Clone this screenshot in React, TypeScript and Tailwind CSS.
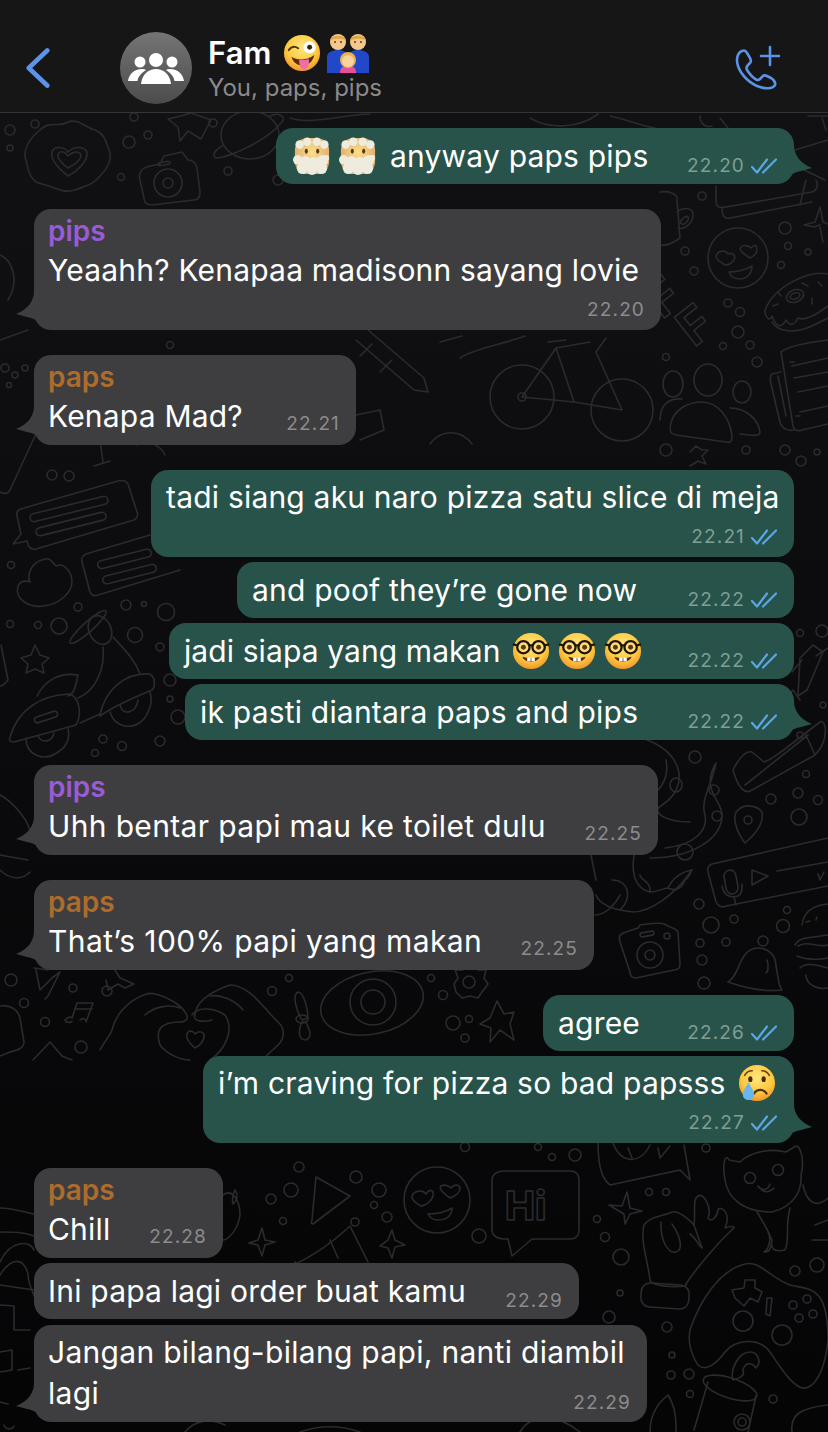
import React from "react";

const FONT = "font-['Inter','Liberation_Sans',sans-serif]";

function Face({ id, children }: { id: string; children: React.ReactNode }) {
  return (
    <svg viewBox="0 0 40 40" className={emojiBase}>
      <defs>
        <radialGradient id={id} cx="50%" cy="35%" r="65%">
          <stop offset="0%" stopColor="#ffe680" />
          <stop offset="65%" stopColor="#fdc93f" />
          <stop offset="100%" stopColor="#f2962b" />
        </radialGradient>
      </defs>
      <circle cx="20" cy="20" r="19" fill={`url(#${id})`} />
      {children}
    </svg>
  );
}

const emojiBase = "block shrink-0 w-[38px] h-[38px]";

function Wink() {
  return (
    <Face id="gw">
      <path d="M6 17 C9 13 13 13 16 15" fill="none" stroke="#5b3410" strokeWidth="2" strokeLinecap="round" />
      <circle cx="28" cy="14" r="6.5" fill="#fff" />
      <circle cx="28" cy="14" r="2.6" fill="#3a2408" />
      <path d="M9 24 C15 28 25 28 33 22 C31 30 26 33 20 33 C14 33 10 29 9 24 Z" fill="#5b2a10" />
      <path d="M17 27 C21 28 25 27 27 26 C28 31 27 37 22 37 C18 37 17 32 17 27 Z" fill="#f06ea8" />
    </Face>
  );
}

function Family() {
  return (
    <svg viewBox="0 0 42 40" className="block w-[42px] h-[40px]">
      <path d="M0 40 V24 C0 19 6 17 11 17 C16 17 21 19 21 24 C21 19 26 17 31 17 C36 17 42 19 42 24 V40 Z" fill="#2148c8" />
      <circle cx="11" cy="9" r="8" fill="#f4c88c" />
      <path d="M3 8 C3 1 19 1 19 8 C16 5 7 5 3 8 Z" fill="#e0a84a" />
      <circle cx="31" cy="9" r="8" fill="#f4c88c" />
      <path d="M23 8 C23 1 39 1 39 8 C36 5 27 5 23 8 Z" fill="#e0a84a" />
      <path d="M13 40 C13 34 16 33 21 33 C26 33 29 34 29 40 Z" fill="#e84f9a" />
      <circle cx="21" cy="27" r="8" fill="#e9b24f" />
      <circle cx="21" cy="28" r="6" fill="#f8d3a0" />
      <circle cx="8" cy="9" r="1" fill="#5a3a18" />
      <circle cx="14" cy="9" r="1" fill="#5a3a18" />
      <circle cx="28" cy="9" r="1" fill="#5a3a18" />
      <circle cx="34" cy="9" r="1" fill="#5a3a18" />
    </svg>
  );
}

function CloudFace() {
  return (
    <svg viewBox="0 0 40 40" className={emojiBase}>
      <defs>
        <radialGradient id="gc" cx="50%" cy="40%" r="60%">
          <stop offset="0%" stopColor="#f9e08a" />
          <stop offset="100%" stopColor="#e0a86a" />
        </radialGradient>
      </defs>
      <rect x="2" y="1" width="36" height="38" rx="13" fill="url(#gc)" />
      <g fill="#efebdf">
        <circle cx="7" cy="8" r="4.5" />
        <circle cx="15" cy="5" r="4.5" />
        <circle cx="25" cy="5" r="4.5" />
        <circle cx="33" cy="8" r="4.5" />
        <circle cx="5" cy="24" r="5" />
        <circle cx="13" cy="26" r="6" />
        <circle cx="22" cy="27" r="6" />
        <circle cx="31" cy="25" r="6" />
        <circle cx="35" cy="22" r="3" />
        <circle cx="10" cy="33" r="6" />
        <circle cx="20" cy="34" r="6" />
        <circle cx="30" cy="33" r="6" />
      </g>
      <ellipse cx="14" cy="15" rx="1.6" ry="2.6" fill="#5b3410" />
      <ellipse cx="26" cy="15" rx="1.6" ry="2.6" fill="#5b3410" />
    </svg>
  );
}

function Nerd() {
  return (
    <Face id="gn">
      <circle cx="12" cy="16" r="6.5" fill="#ffdc7a" stroke="#1c1408" strokeWidth="2.4" />
      <circle cx="28" cy="16" r="6.5" fill="#ffdc7a" stroke="#1c1408" strokeWidth="2.4" />
      <path d="M1 13 L6 14 M18 14 L22 14 M34 14 L39 13" stroke="#1c1408" strokeWidth="2.4" />
      <circle cx="12" cy="16" r="2.6" fill="#5b3410" />
      <circle cx="28" cy="16" r="2.6" fill="#5b3410" />
      <path d="M11 26 C16 28 24 28 29 26 C27 33 13 33 11 26 Z" fill="#5b2a10" />
      <rect x="16" y="27" width="3.6" height="4" fill="#fff" />
      <rect x="20.4" y="27" width="3.6" height="4" fill="#fff" />
    </Face>
  );
}

function Crying() {
  return (
    <Face id="gy">
      <path d="M7 12 C9 8 12 7 15 7 M25 7 C28 7 31 8 33 12" fill="none" stroke="#6b3d10" strokeWidth="1.6" strokeLinecap="round" />
      <ellipse cx="13" cy="16" rx="2.2" ry="3" fill="#4a2a0c" />
      <ellipse cx="27" cy="16" rx="2.2" ry="3" fill="#4a2a0c" />
      <path d="M17 31 C20 26 27 26 30 31" fill="none" stroke="#5b3010" strokeWidth="2.4" strokeLinecap="round" />
      <path d="M11 19 C13 24 17 28 17 32 A6 6 0 0 1 5 32 C5 28 9 24 11 19 Z" fill="#6bb6ee" />
    </Face>
  );
}

const circles: [number, number, number][] = [
  [10, 130, 5], [35, 124, 4], [10, 148, 3], [134, 117, 4], [213, 123, 4], [148, 135, 4], [129, 142, 6], [121, 177, 3.5], [228, 171, 4], [278, 180, 5],
  [702, 196, 4], [785, 228, 6], [788, 246, 3.5], [781, 265, 3.5], [808, 252, 3], [685, 251, 4], [694, 271, 4], [728, 303, 4], [740, 312, 4.5], [738, 332, 6], [723, 346, 3.5], [750, 345, 4], [757, 362, 5], [666, 357, 3.5],
  [666, 450, 6], [746, 450, 4], [785, 450, 5], [801, 461, 5], [817, 452, 3],
  [5, 368, 4], [15, 375, 3], [25, 368, 3], [9, 385, 2.5], [52, 475, 5], [69, 476, 5], [170, 345, 3.5],
  [11, 565, 3.5], [78, 607, 4], [126, 605, 5], [144, 604, 2.5], [166, 612, 8.5], [10, 624, 3.5], [38, 625, 3.5], [59, 626, 8], [135, 635, 7.5], [160, 647, 4], [170, 680, 6], [170, 699, 3], [178, 717, 7], [103, 739, 4], [122, 746, 4.5], [95, 753, 3.5], [160, 741, 5],
  [800, 633, 3.5], [822, 631, 6], [800, 735, 3], [823, 705, 3],
  [680, 665, 2], [640, 628, 3], [590, 650, 2],
  [806, 774, 3.5], [798, 793, 5], [818, 800, 4.5], [771, 799, 5], [799, 817, 8], [695, 757, 6],
  [699, 904, 5], [711, 925, 8], [734, 919, 4], [787, 910, 3.5], [783, 926, 6.5], [700, 943, 4], [726, 942, 4], [702, 960, 5], [704, 983, 6],
  [11, 980, 6], [73, 988, 4], [107, 991, 5], [24, 1003, 4.5], [45, 1022, 4.5], [81, 1047, 6], [289, 978, 3.5], [272, 991, 4.5], [431, 978, 3.5], [443, 995, 4.5], [453, 1023, 7], [469, 1019, 3.5], [465, 1038, 4],
  [299, 1167, 5], [271, 1199, 5], [291, 1190, 7], [356, 1177, 6], [379, 1190, 7], [374, 1205, 3.5], [355, 1222, 4], [387, 1217, 5], [283, 1221, 3.5],
  [465, 1147, 4.5], [538, 1147, 3.5], [552, 1157, 3.5], [575, 1155, 6], [479, 1236, 7], [597, 1219, 3.5], [605, 1237, 4.5],
  [649, 1192, 3.5], [666, 1192, 3.5], [621, 1257, 8], [620, 1293, 3], [609, 1317, 6],
  [667, 1327, 5], [672, 1355, 3], [671, 1375, 4], [689, 1374, 5], [690, 1394, 3.5], [773, 1399, 4], [795, 1271, 5], [817, 1265, 7], [706, 1148, 4],
];

function Wallpaper() {
  return (
    <svg viewBox="0 0 828 1432" className="absolute inset-0 w-full h-full" fill="none" stroke="#2b2b2e" strokeWidth="1.6" strokeLinecap="round" strokeLinejoin="round">
      {circles.map(([x, y, r], i) => (
        <circle key={i} cx={x} cy={y} r={r} />
      ))}
      <path d="M40 130 C50 120 58 128 68 122 C78 118 86 128 95 130 C106 134 106 144 110 152 C112 162 106 170 100 176 C92 186 84 186 75 190 C62 194 52 186 42 184 C30 182 28 170 26 160 C22 150 30 138 40 130 Z" />
      <path d="M68 176 C60 170 50 160 52 152 C54 146 64 146 68 152 C74 146 84 146 87 152 C88 162 76 172 68 176 Z" />
      <path d="M68 168 C62 164 57 158 58 154 C60 150 66 152 68 156 C72 152 79 150 81 155 C81 160 74 165 68 168 Z" />
      <path d="M140 180 C138 172 142 168 150 166 L160 164 L164 156 L182 152 L188 160 C194 160 196 164 197 168 L200 192 C200 198 198 200 194 200 L152 205 C146 205 144 202 144 198 Z" />
      <circle cx="168" cy="183" r="14" />
      <circle cx="168" cy="183" r="5" />
      <rect x="158" y="162" width="12" height="3" rx="1.5" transform="rotate(-10 164 163)" />
      <ellipse cx="250" cy="135" rx="29" ry="24" />
      <path d="M222 146 C212 152 212 158 218 158 C232 156 268 140 282 122 C286 116 278 112 270 116" />
      <path d="M193 119 L183 138 L170 130 L162 140 L160 126 L150 118 L163 115 L173 112 Z" transform="translate(18 1)" />
      <path d="M290 118 C310 125 340 115 370 114 M530 118 C550 130 580 128 598 114 M610 116 C630 120 650 130 670 130" />
      <path d="M700 116 C700 124 706 128 712 126 M720 118 L728 128" />
      <path d="M660 192 C672 190 678 196 677 200 L680 238 C672 244 666 246 660 245" />
      <path d="M677 212 C684 206 694 208 693 216 C692 224 684 230 678 228 M680 222 C684 216 690 214 688 220 C686 224 682 226 680 222 Z" />
      <path d="M716 186 L716 200 C716 208 720 208 726 207 L812 192 C818 190 818 184 816 180 M722 208 C722 218 726 219 730 218 L812 202" />
      <path d="M820 225 L814 227 L804 225 L815 222 L820 207 L823 222 L828 224 M820 227 L823 242" />
      <circle cx="738" cy="258" r="30" />
      <path d="M725 265 C719 261 714 258 717 254 C720 250 726 250 728 254 C733 252 736 256 734 260 C732 263 728 265 725 265 Z" />
      <path d="M750 258 C744 254 738 250 741 247 C744 244 749 246 751 248 C755 244 757 245 757 250 C757 254 754 256 750 258 Z" />
      <path d="M729 272 C736 272 745 270 752 266 C752 274 746 279 740 279 C735 279 731 277 729 272 Z" />
      <text x="0" y="0" transform="translate(662 320) rotate(-38)" fontFamily="Inter" fontWeight="700" fontSize="50" fill="none">F</text>
      <text x="0" y="0" transform="translate(694 348) rotate(-38)" fontFamily="Inter" fontWeight="700" fontSize="50" fill="none">F</text>
      <path d="M765 310 C775 285 810 270 828 274 M765 310 C765 318 770 322 772 316 C776 328 782 328 786 320 C790 326 794 326 798 318 C806 322 820 312 828 306 M772 322 C778 332 794 334 812 326 L828 318" />
      <ellipse cx="795" cy="296" rx="9" ry="6" transform="rotate(-20 795 296)" />
      <ellipse cx="795" cy="296" rx="5" ry="3" transform="rotate(-20 795 296)" />
      <path d="M778 292 L781 296 M773 306 L778 304 M802 283 L808 286 M812 298 L812 304 M818 282 L822 286" />
      <ellipse cx="708" cy="380" rx="14" ry="16" />
      <ellipse cx="673" cy="384" rx="10" ry="13" />
      <ellipse cx="742" cy="392" rx="9" ry="11" />
      <path d="M670 428 C672 408 690 402 702 402 C718 402 730 418 732 436 C732 442 730 443 726 442 L676 435 C671 434 670 432 670 428 Z" />
      <path d="M730 408 C745 408 758 418 760 432 C760 436 756 436 740 434 M682 399 C672 398 660 402 660 420" />
      <path d="M690 452 L696 446 L702 450 L708 450 L702 456 L706 464 L698 461 L690 466" />
      <path d="M781 352 C788 346 812 342 828 340 M781 352 L793 426 C794 430 798 432 802 430 L828 424" />
      <path d="M781 372 L772 374 C770 376 770 380 771 384 L780 422 C782 430 790 431 794 430" />
      <path d="M778 376 L786 416" />
      <path d="M792 366 L828 358 M794 378 L828 372 M798 392 L828 386 M800 412 L828 406 M790 362 L794 362 M796 416 L800 416" />
      <path d="M356 340 L414 390 L428 392 L424 378 L368 330 M372 344 L360 356 M392 360 L380 372" />
      <circle cx="522" cy="397" r="32" />
      <circle cx="522" cy="397" r="4" />
      <circle cx="622" cy="410" r="31" />
      <path d="M522 397 L556 348 L590 342 M556 348 L574 402 L622 410 L596 352 L606 338 M574 402 L522 397 M548 342 L566 340" />
      <path d="M460 358 C470 350 500 345 525 336 M440 342 L462 336 M430 444 C440 430 460 428 472 444 M356 415 L380 410 L384 430 L360 440" />
      <path d="M100 440 L103 462 M94 466 L110 461 M85 425 C88 438 110 440 118 428 M136 445 C150 440 160 445 165 455" />
      <path d="M40 425 L10 490 C8 494 4 494 0 492 M60 412 C62 420 72 420 80 412" />
      <path d="M24 508 C18 509 16 512 17 516 L21 534 L13 544 L27 541 C28 548 32 550 36 549 L134 520 C138 518 138 514 137 512 L128 484 C126 480 122 480 118 481 Z" />
      <rect x="29" y="505" width="80" height="8" rx="4" transform="rotate(-14 69 509)" />
      <rect x="35" y="520" width="72" height="8" rx="4" transform="rotate(-14 71 524)" />
      <path d="M150 535 L86 554 C82 556 81 558 82 562 L90 592 C92 596 94 596 98 595 L180 570" />
      <rect x="97" y="555" width="55" height="8" rx="4" transform="rotate(-14 124 559)" />
      <rect x="102" y="570" width="55" height="8" rx="4" transform="rotate(-14 130 574)" />
      <path d="M30 582 C26 572 34 562 42 560 C50 556 52 562 56 566 C64 562 72 572 72 582 C72 592 60 604 44 606 C30 608 14 600 18 586 C20 582 24 580 30 582 Z" />
      <path d="M35 645 L40 655 L49 658 L42 664 L44 673 L35 669 L26 673 L28 664 L21 658 L31 655 Z" />
      <path d="M10 737 C18 710 40 695 70 694 C80 698 82 715 76 725 L14 742 C9 742 9 739 10 737 Z" />
      <path d="M37 696 C45 680 60 672 78 675 C76 685 74 695 68 696" />
      <path d="M100 715 C105 690 125 672 150 674 C156 678 155 688 152 690 C135 697 115 705 100 716 Z" />
      <path d="M113 637 C125 650 135 660 140 674" />
      <ellipse cx="88" cy="627" rx="24" ry="5" transform="rotate(-42 88 627)" />
      <ellipse cx="100" cy="630" rx="11" ry="15" transform="rotate(-25 100 630)" />
      <path d="M103 647 C105 665 98 690 78 698 M80 723 L100 714" />
      <rect x="34" y="714" width="24" height="6" rx="3" transform="rotate(-18 46 717)" />
      <path d="M26 738 C26 756 45 762 58 752 C68 746 70 736 68 729 M38 736 C42 744 52 742 54 733" />
      <path d="M110 712 C115 730 140 732 148 712 C152 704 152 698 150 692 M120 705 C122 716 136 714 138 700" />
      <path d="M1 645 L8 680 C5 684 2 686 0 686" />
      <path d="M647 740 C683 753 690 787 662 805 C650 812 665 822 690 822 M640 808 C660 790 670 780 666 760" />
      <path d="M716 763 C700 790 722 800 722 815 C722 840 690 858 650 858 M716 763 C712 785 700 800 705 815 C708 830 695 845 665 848" />
      <ellipse cx="676" cy="785" rx="6" ry="7" />
      <circle cx="714" cy="790" r="5" />
      <circle cx="717" cy="816" r="5" />
      <circle cx="685" cy="852" r="8" />
      <path d="M634 855 C630 880 640 890 650 892 C660 892 662 888 668 888 C676 892 682 888 685 880 C692 875 690 870 692 870 C680 872 672 880 668 888 M650 892 C652 882 640 880 640 875" />
      <path d="M692 870 C675 895 650 912 633 912 C612 910 600 905 596 895 M612 880 C630 880 632 900 620 910" />
      <path d="M595 915 C605 915 615 905 620 895 M590 850 L596 880" />
      <path d="M733 770 C738 760 745 750 752 752 L764 762 C772 760 790 745 820 722 C826 718 830 740 815 755 L752 790 C745 795 738 788 733 770 Z M806 735 L815 755 M745 785 L808 735" />
      <path d="M800 658 L813 645 L823 652 L807 690 L798 696 Z M816 656 L828 648" />
      <path d="M792 672 L802 660 M783 700 L793 690 L800 700" />
      <path d="M745 843 C735 830 732 815 738 810 C745 803 758 806 762 812 C764 822 758 832 745 843 Z" />
      <circle cx="748" cy="820" r="4" />
      <path d="M828 838 L712 864 C708 866 707 868 708 872 L716 902 C718 906 722 908 726 906 L828 886" />
      <rect x="725" y="870" width="12" height="24" rx="6" transform="rotate(-10 731 882)" />
      <path d="M722 886 C724 896 730 898 738 896 C742 894 742 890 742 884 M734 897 L736 905" />
      <path d="M752 870 L752 885 L768 876 Z" />
      <path d="M777 871 L828 862 M820 880 L824 872 M818 874 L820 880" />
      <path d="M620 942 C618 936 620 934 626 932 L638 928 L640 925 C648 924 660 922 664 924 L668 926 C672 928 676 928 678 932 L680 964 C680 968 678 970 674 970 L636 978 C632 978 630 976 630 972 Z" />
      <circle cx="650" cy="955" r="13" />
      <circle cx="650" cy="955" r="5" />
      <rect x="640" y="932" width="14" height="4" rx="2" transform="rotate(-10 647 934)" />
      <circle cx="667" cy="936" r="3" />
      <path d="M728 982 C736 978 738 965 744 956 C748 950 754 948 758 948 C768 948 776 955 776 966 C778 975 778 985 782 990 C764 992 745 988 728 982 Z" />
      <circle cx="763" cy="941" r="5" />
      <path d="M767 960 C769 966 768 972 766 973" />
      <path d="M802 925 C804 910 815 905 828 904 M798 946 C808 940 818 948 828 945 M795 945 C800 936 812 938 828 935 M797 956 C806 960 820 960 828 958 M800 968 C806 962 816 965 828 968 M806 975 C806 985 818 990 828 988" />
      <path d="M816 920 L817 917 M806 922 L810 921" />
      <path d="M36 970 L40 990 L52 978 L60 972 M60 972 L48 996 L45 999 M34 968 L48 970" />
      <path d="M115 970 L120 978 L134 984 L125 988 L118 984 L108 990 L106 980" />
      <path d="M0 1006 C10 1004 18 1010 20 1018 L24 1042 C24 1048 18 1050 10 1052 L0 1056" />
      <path d="M65 1020 C67 1018 70 1016 72 1018 L77 1003 L93 1003 L86 1022 C86 1018 82 1018 80 1020 M76 1009 L92 1009 M72 1021 C72 1022 66 1024 65 1020" />
      <path d="M33 1060 L50 1042 L62 1056 L72 1060" />
      <path d="M100 1050 C105 1040 110 1036 112 1030 C118 1005 145 990 155 994 C165 996 180 1004 185 1012 C190 1018 186 1022 180 1022" />
      <path d="M145 1015 C155 1006 170 1004 180 1008 M180 1022 C160 1022 155 1030 160 1045 C165 1052 178 1060 190 1060" />
      <path d="M195 1015 C196 1002 210 992 230 985 C250 985 265 1010 278 1022 C285 1028 285 1038 278 1045 L262 1060" />
      <path d="M192 1015 C198 1006 215 1008 225 1015 C235 1030 225 1050 210 1060 M195 1015 C192 1022 205 1022 212 1020 M243 1010 C235 1000 220 994 210 996" />
      <path d="M195 1048 C188 1042 185 1036 188 1032 C191 1030 194 1032 195 1034 C197 1032 201 1030 204 1034 C205 1040 200 1046 195 1048 Z" />
      <ellipse cx="372" cy="1003" rx="52" ry="31" transform="rotate(-12 372 1003)" />
      <circle cx="373" cy="1002" r="23" />
      <circle cx="373" cy="1002" r="12" />
      <path d="M302 1020 C296 1010 292 995 298 992 C304 992 308 1010 308 1018 Z M302 1022 C298 1030 298 1040 306 1040 C314 1036 308 1028 306 1022 Z" />
      <ellipse cx="302" cy="1019" rx="6" ry="4" />
      <circle cx="469" cy="982" r="6" />
      <path d="M455 970 L463 970 L467 962 L474 962 L478 970 L486 970 L484 978 L488 984 L482 992 L478 998 L470 996 L462 998 L456 992 L454 984 L458 978 Z" />
      <path d="M497 1001 L504 1014 L514 1012 L510 1024 L514 1040 L500 1030 L490 1042 L491 1028 L480 1024 L490 1018 Z" />
      <path d="M598 1142 C598 1172 604 1180 610 1185 L680 1170 L690 1180 L684 1145 M612 1140 C620 1165 640 1165 650 1145 M628 1148 L632 1158 M670 1146 L660 1158 L658 1148" />
      <path d="M316 1177 L350 1196 L313 1224 C311 1224 311 1222 312 1220 Z" />
      <circle cx="437" cy="1200" r="33" />
      <path d="M421 1206 C414 1202 410 1198 413 1194 C417 1190 423 1190 426 1194 C430 1188 434 1190 433 1196 C432 1200 426 1206 421 1206 Z" />
      <path d="M450 1198 C444 1194 438 1188 441 1186 C444 1184 449 1186 451 1188 C454 1184 459 1184 460 1188 C460 1192 456 1196 450 1198 Z" />
      <path d="M428 1214 C436 1214 446 1212 452 1208 C452 1216 446 1220 438 1220 C433 1220 430 1218 428 1214 Z" />
      <path d="M504 1171 H570 C576 1171 579 1174 579 1180 V1230 C579 1236 576 1239 570 1239 H532 L512 1256 L508 1239 H504 C498 1239 492 1236 492 1230 V1180 C492 1174 498 1171 504 1171 Z" />
      <text x="505" y="1220" fontFamily="Inter" fontWeight="800" fontSize="40" fill="none">Hi</text>
      <path d="M262 1228 L265 1240 L275 1242 L265 1245 L262 1256 L258 1245 L249 1243 L258 1240 Z" />
      <path d="M392 1230 L395 1240 L405 1245 L395 1247 L392 1258 L388 1248 L380 1246 L388 1240 Z" />
      <path d="M627 1192 L630 1208 L642 1211 L630 1214 L625 1224 L624 1214 L609 1205 L622 1206 Z" />
      <path d="M223 1195 C232 1188 240 1200 240 1215 C238 1230 228 1240 223 1240 M235 1190 C232 1196 232 1200 233 1204 C238 1200 238 1194 235 1190" />
      <path d="M280 1270 C310 1260 335 1240 350 1226 L368 1262 M330 1240 L338 1258 M295 1262 L300 1270" />
      <path d="M729 1160 C725 1152 722 1165 725 1180 C728 1200 745 1212 772 1212 C795 1206 802 1190 801 1175 C805 1160 800 1145 796 1146 L786 1152 C770 1148 750 1152 740 1162 Z" />
      <circle cx="750" cy="1178" r="5.5" />
      <circle cx="778" cy="1170" r="5.5" />
      <path d="M758 1186 C762 1192 768 1190 770 1184 M762 1190 C766 1194 772 1190 774 1188" />
      <path d="M757 1212 C765 1225 770 1235 772 1240 C770 1250 770 1252 764 1252 C768 1250 772 1240 768 1232 M790 1208 C785 1225 790 1240 785 1250 C775 1252 770 1250 772 1240 M803 1185 C806 1200 815 1210 828 1198 M815 1225 L828 1220 M812 1240 L828 1240" />
      <path d="M644 1225 C640 1240 648 1262 650 1280 C652 1288 690 1288 686 1284 C695 1270 720 1240 734 1228 C734 1226 730 1226 725 1228 C732 1212 720 1205 718 1210 C716 1220 710 1222 708 1218 C712 1208 704 1192 698 1196 C692 1200 696 1212 694 1225 C690 1220 678 1210 672 1212 C665 1216 650 1216 644 1225 Z" />
      <path d="M661 1222 C660 1240 668 1254 676 1252 C684 1250 680 1235 672 1224 M694 1225 L702 1248 C700 1248 696 1238 690 1234" />
      <rect x="641" y="1284" width="48" height="24" rx="9" transform="rotate(4 665 1296)" />
      <path d="M690 1330 C700 1300 720 1270 745 1264 C760 1260 770 1278 790 1285 C810 1290 828 1285 828 1340 C826 1360 820 1384 806 1388 C795 1390 782 1370 772 1355 C760 1335 735 1340 725 1352 C712 1370 700 1372 695 1360 C690 1350 688 1340 690 1330 Z" />
      <path d="M745 1280 L755 1280 L755 1288 L762 1292 L758 1302 L750 1298 L744 1306 L735 1298 L732 1290 L744 1288 Z" />
      <circle cx="743" cy="1321" r="10" />
      <circle cx="782" cy="1335" r="10" />
      <path d="M767 1298 L772 1298 L770 1316 L766 1314 Z" />
      <circle cx="793" cy="1305" r="4" />
      <circle cx="807" cy="1299" r="4" />
      <circle cx="799" cy="1318" r="4" />
      <circle cx="813" cy="1314" r="4" />
      <path d="M733 1380 C730 1370 738 1352 750 1352 C758 1352 762 1362 756 1368 C752 1362 745 1362 743 1370 C745 1376 740 1378 733 1380 Z" />
      <ellipse cx="730" cy="1388" rx="28" ry="10" transform="rotate(18 730 1388)" />
      <path d="M708 1382 L694 1430 M756 1396 L748 1432" />
      <circle cx="742" cy="1422" r="8" />
      <circle cx="742" cy="1422" r="4" />
      <path d="M792 1432 C790 1415 800 1408 828 1405" />
      <path d="M650 1432 C650 1410 662 1400 668 1395 C676 1408 676 1420 676 1432" />
      <path d="M0 1208 C12 1208 24 1212 34 1214 M0 1232 C14 1232 24 1232 34 1236 M0 1285 L34 1290 M0 1305 L14 1306 L14 1330 L30 1330" />
      <path d="M0 1262 C10 1240 30 1240 34 1250 M0 1275 C12 1256 24 1258 28 1274 C28 1284 34 1294 34 1296" />
      <path d="M0 1352 L12 1350 L12 1370 L0 1372 M18 1370 L30 1368 M0 1402 L8 1404 M4 1425 C6 1430 12 1430 14 1426" />
      <path d="M185 1432 C195 1420 210 1418 225 1425 M300 1432 C320 1425 340 1425 360 1432 M520 1432 C530 1415 555 1412 580 1432" />
      <path d="M0 855 L28 860 M0 870 C10 880 22 880 30 872 M0 255 C12 260 20 280 8 300 M0 795 C10 800 25 815 30 830 M0 340 L28 330" />
      <path d="M670 130 C690 140 720 150 744 160 M795 150 L828 140 M800 168 L825 180 M806 180 L800 205 M826 130 L822 118 M808 116 L828 116" />
    </svg>
  );
}

function Ticks() {
  return (
    <svg viewBox="0 0 26 16" className="w-[26px] h-[16px] ml-[6px] mb-[2px]" fill="none" stroke="#5ca6e4" strokeWidth="2.2" strokeLinecap="round" strokeLinejoin="round">
      <path d="M1 9 L6 14.5 L16 1.5" />
      <path d="M12 14.5 L25 1.5" />
    </svg>
  );
}

function Tail({ side, color }: { side: "l" | "r"; color: string }) {
  return (
    <svg viewBox="0 0 24 34" className={side === "l" ? "absolute left-[-18px] bottom-[7px] w-[24px] h-[34px]" : "absolute right-[-18px] bottom-[7px] w-[24px] h-[34px] -scale-x-100"}>
      <path d="M18 2 C18 12 12 20 0 25 C6 27 14 28 20 31 L24 34 L24 2 Z" fill={color} />
    </svg>
  );
}

type MsgProps = {
  side: "l" | "r";
  w: string;
  name?: "pips" | "paps";
  children: React.ReactNode;
  first?: string;
  time: string;
  tail?: boolean;
  below?: boolean;
  mt: string;
  track?: string;
};

function Msg({ side, w, name, children, first, time, tail, below, mt, track = "tracking-[0.2px]" }: MsgProps) {
  const out = side === "r";
  const inlineAfterName = !below && !!name;
  const timeEl = (
    <div className={`flex items-end shrink-0 ${inlineAfterName ? "mb-[2px]" : ""}`}>
      <span className={`text-[19px] leading-[20px] tracking-[0.06em] ${out ? "text-[#7f9f95]" : "text-[#8c8c8e]"}`}>{time}</span>
      {out && <Ticks />}
    </div>
  );
  const line = <div className={`flex items-center h-[40px] text-[30px] ${track} text-white whitespace-nowrap`}>{children}</div>;
  return (
    <div className={`relative rounded-[17px] ${w} ${mt} ${out ? "self-end mr-[34px] bg-[#27534a] pl-[15px] pr-[17px]" : "self-start ml-[34px] bg-[#3e3e40] pl-[14px] pr-[16px]"} ${name ? "pt-[6px]" : first || below ? "pt-[7px]" : "pt-[8px]"} ${below ? "pb-[10px]" : name || first ? "pb-[9px]" : "pb-[8px]"}`}>
      {tail && <Tail side={side} color={out ? "#27534a" : "#3e3e40"} />}
      {name && (
        <div className={`text-[28px] leading-[32px] font-semibold mb-[3px] ${name === "pips" ? "text-[#9a5bd6]" : "text-[#ad6c2c]"}`}>{name}</div>
      )}
      {first && <div className={`h-[41px] flex items-center text-[30px] ${track} text-white whitespace-nowrap`}>{first}</div>}
      {below ? (
        <>
          {line}
          <div className="flex justify-end mt-[10px]">{timeEl}</div>
        </>
      ) : (
        <div className="flex items-end justify-between">
          {line}
          {timeEl}
        </div>
      )}
    </div>
  );
}

export default function App() {
  return (
    <div className={`relative w-[828px] h-[1432px] overflow-hidden flex flex-col bg-gradient-to-b from-[#121215] via-[#0b0b0d] to-[#050506] ${FONT}`}>
      <Wallpaper />
      <header className="relative shrink-0 h-[113px] bg-[#161616] border-b border-[#343434] flex items-center pt-[24px] pl-[26px] pr-[45px]">
        <svg viewBox="0 0 26 44" className="w-[24px] h-[44px]" fill="none" stroke="#5b93e8" strokeWidth="5" strokeLinecap="round" strokeLinejoin="round">
          <path d="M23 3 L3 22 L23 41" />
        </svg>
        <div className="ml-[70px] w-[72px] h-[72px] rounded-full bg-gradient-to-b from-[#757575] to-[#4c4c4c] flex items-center justify-center">
          <svg viewBox="0 0 56 32" className="w-[56px] h-[32px]" fill="#fff">
            <circle cx="28" cy="8" r="7" />
            <circle cx="12" cy="10" r="5.5" />
            <circle cx="44" cy="10" r="5.5" />
            <path d="M13 32 C14 22 21 17 28 17 C35 17 42 22 43 32 C43 32 13 32 13 32 Z" />
            <path d="M0 29 C1 22 6 17 14 17 C15 17 17 17 18 18 C13 21 10 25 9.5 29 Z" />
            <path d="M56 29 C55 22 50 17 42 17 C41 17 39 17 38 18 C43 21 46 25 46.5 29 Z" />
          </svg>
        </div>
        <div className="ml-[16px] flex flex-col">
          <div className="flex items-center h-[40px] mt-[-1px]">
            <span className="text-[31px] leading-[36px] font-semibold text-white">Fam</span>
            <span className="ml-[12px] flex items-center gap-[6px]">
              <Wink />
              <Family />
            </span>
          </div>
          <span className="text-[24px] leading-[30px] text-[#8a8a8c]">You, paps, pips</span>
        </div>
        <svg viewBox="735 44 48 48" className="ml-auto w-[48px] h-[48px]" fill="none" stroke="#5b93e8" strokeWidth="2.6" strokeLinecap="round" strokeLinejoin="round">
          <path d="M742 51 C737 53 736 60 738 66 C741 75 750 84 760 87 C766 89 773 89 775 85 C776 82 774 80 771 78 L767 76 C765 75 763 75 762 77 L760 79 C758 81 756 80 754 78 C751 76 749 73 747 70 C746 68 746 67 748 65 L750 63 C751 62 751 60 750 58 L747 53 C746 51 744 50 742 51 Z" />
          <path d="M770 47 V65 M761 56 H779" />
        </svg>
      </header>
      <main className="relative flex flex-col flex-1">
        <Msg side="r" w="w-[518px]" tail mt="mt-[15px]" time="22.20">
          <span className="flex gap-[8px] ml-[2px] mr-[13px]"><CloudFace /><CloudFace /></span>anyway paps pips
        </Msg>
        <Msg side="l" w="w-[627px]" name="pips" below tail mt="mt-[25px]" time="22.20">Yeaahh? Kenapaa madisonn sayang lovie</Msg>
        <Msg side="l" w="w-[322px]" name="paps" tail mt="mt-[25px]" time="22.21">Kenapa Mad?</Msg>
        <Msg side="r" w="w-[643px]" below mt="mt-[25px]" time="22.21">tadi siang aku naro pizza satu slice di meja</Msg>
        <Msg side="r" w="w-[557px]" mt="mt-[5px]" time="22.22">and poof they’re gone now</Msg>
        <Msg side="r" w="w-[625px]" mt="mt-[5px]" time="22.22" track="tracking-[0.1px]">
          jadi siapa yang makan<span className="flex gap-[8px] ml-[12px]"><Nerd /><Nerd /><Nerd /></span>
        </Msg>
        <Msg side="r" w="w-[609px]" tail mt="mt-[5px]" time="22.22">ik pasti diantara paps and pips</Msg>
        <Msg side="l" w="w-[624px]" name="pips" tail mt="mt-[25px]" time="22.25" track="tracking-[0.35px]">Uhh bentar papi mau ke toilet dulu</Msg>
        <Msg side="l" w="w-[560px]" name="paps" tail mt="mt-[25px]" time="22.25" track="tracking-[0.4px]">That’s 100% papi yang makan</Msg>
        <Msg side="r" w="w-[251px]" mt="mt-[25px]" time="22.26">agree</Msg>
        <Msg side="r" w="w-[591px]" below tail mt="mt-[5px]" time="22.27">
          i’m craving for pizza so bad papsss<span className="ml-[12px]"><Crying /></span>
        </Msg>
        <Msg side="l" w="w-[189px]" name="paps" mt="mt-[25px]" time="22.28">Chill</Msg>
        <Msg side="l" w="w-[545px]" mt="mt-[5px]" time="22.29">Ini papa lagi order buat kamu</Msg>
        <Msg side="l" w="w-[613px]" first="Jangan bilang-bilang papi, nanti diambil" tail mt="mt-[6px]" time="22.29" track="tracking-[0.3px]">lagi</Msg>
      </main>
    </div>
  );
}
